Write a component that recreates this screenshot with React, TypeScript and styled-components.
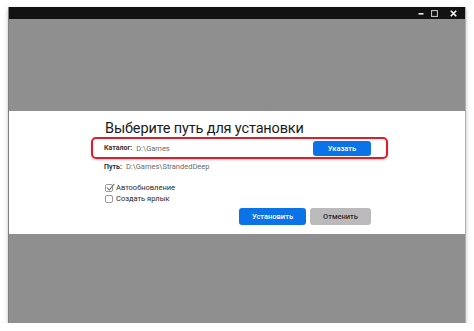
import styled, {createGlobalStyle} from "styled-components";

const GlobalStyle = createGlobalStyle`
  html, body {
    margin: 0;
    padding: 0;
    background: #ffffff;
  }
  body {
    font-family: Roboto, "Liberation Sans", sans-serif;
    color: #1d1d1d;
  }
`;

const Window = styled.div`
  margin: 7px 8px 0;
  width: 458px;
  height: 316px;
  display: grid;
  grid-template-rows: 12px 92px 123px 1fr;
  border-left: 1px solid #808080;
  border-right: 1px solid #b0b0b0;
  box-sizing: border-box;
  box-shadow: 0 2px 4px rgba(0, 0, 0, 0.25);
`;

const TitleBar = styled.div`
  background: #121212;
  display: flex;
  justify-content: flex-end;
  align-items: center;
  gap: 7px;
  padding-right: 8px;
`;

const Backdrop = styled.div`
  background: #8f8f8f;
`;

const Dialog = styled.div`
  background: #ffffff;
  padding: 10px 0 0 82px;
`;

const Column = styled.div`
  width: 297px;
  display: flex;
  flex-direction: column;
`;

const Heading = styled.h1`
  margin: 0;
  padding-left: 14px;
  font-size: 14.5px;
  line-height: 16px;
  font-weight: 400;
  color: #1b1b1b;
  letter-spacing: -0.15px;
`;

const PathBox = styled.div`
  height: 22px;
  box-sizing: border-box;
  border: 2px solid #e11d2c;
  border-radius: 5px;
  display: flex;
  align-items: center;
  padding: 0 15px 0 11px;
  box-shadow: 0 1px 2px rgba(225, 29, 44, 0.25);
`;

const Label = styled.span`
  font-size: 7px;
  font-weight: 700;
  color: #333333;
  margin-right: 4px;
`;

const Value = styled.span`
  font-size: 7.5px;
  color: #6a6a6a;
  flex: 1;
`;

interface IButton {
  variant: "primary" | "secondary";
  width: number;
}

const Button = styled.button<IButton>`
  width: ${props => props.width}px;
  border: none;
  border-radius: 3px;
  font-family: inherit;
  font-size: 7.5px;
  font-weight: 500;
  padding: 0;
  background: ${props => (props.variant === "primary" ? "#0b73e8" : "#bababa")};
  color: ${props => (props.variant === "primary" ? "#ffffff" : "#2a2a2a")};
`;

const PickButton = styled(Button)`
  height: 15px;
  margin-top: 1px;
`;

const PathLine = styled.div`
  margin-top: 3px;
  padding-left: 13px;
  line-height: 10px;
  font-size: 7.5px;
  color: #6a6a6a;
`;

const Options = styled.div`
  margin-top: 10px;
  padding-left: 14px;
  display: flex;
  flex-direction: column;
`;

const Option = styled.label`
  display: flex;
  align-items: center;
  gap: 3px;
  height: 11px;
  font-size: 7.5px;
  color: #2a2a2a;
`;

const Box = styled.span`
  width: 6px;
  height: 6px;
  border: 1px solid #9a9a9a;
  border-radius: 2px;
  display: flex;
  align-items: center;
  justify-content: center;
  position: relative;
`;

const Actions = styled.div`
  margin-top: 4px;
  padding-right: 17px;
  display: flex;
  justify-content: flex-end;
  gap: 4px;
`;

const ActionButton = styled(Button)`
  height: 17px;
`;

const Check = () => (
  <svg width="9" height="8" viewBox="0 0 9 8" style={{position: "absolute", left: 0, top: -2}}>
    <path d="M1 4.5 L3.3 7 L8.3 0.8" fill="none" stroke="#6f6f6f" strokeWidth="1.1" />
  </svg>
);

const Controls = () => (
  <>
    <svg width="6" height="6" viewBox="0 0 6 6">
      <rect x="0.5" y="3" width="5" height="1.6" fill="#e8e8e8" />
    </svg>
    <svg width="7" height="7" viewBox="0 0 7 7">
      <rect x="0.6" y="0.6" width="5.8" height="5.8" fill="none" stroke="#cfcfcf" strokeWidth="1" />
    </svg>
    <svg width="7" height="7" viewBox="0 0 7 7" style={{marginLeft: 5}}>
      <path d="M0.8 0.8 L6.2 6.2 M6.2 0.8 L0.8 6.2" stroke="#ffffff" strokeWidth="1.6" />
    </svg>
  </>
);

const App = () => {
  return (
    <>
      <GlobalStyle />
      <Window>
        <TitleBar>
          <Controls />
        </TitleBar>
        <Backdrop />
        <Dialog>
          <Column>
            <Heading>Выберите путь для установки</Heading>
            <PathBox>
              <Label>Каталог:</Label>
              <Value>D:\Games</Value>
              <PickButton variant="primary" width={58}>
                Указать
              </PickButton>
            </PathBox>
            <PathLine>
              <Label>Путь:</Label>D:\Games\StrandedDeep
            </PathLine>
            <Options>
              <Option>
                <Box>
                  <Check />
                </Box>
                Автообновление
              </Option>
              <Option>
                <Box />
                Создать ярлык
              </Option>
            </Options>
            <Actions>
              <ActionButton variant="primary" width={67}>
                Установить
              </ActionButton>
              <ActionButton variant="secondary" width={61}>
                Отменить
              </ActionButton>
            </Actions>
          </Column>
        </Dialog>
        <Backdrop />
      </Window>
    </>
  );
};

export default App;
